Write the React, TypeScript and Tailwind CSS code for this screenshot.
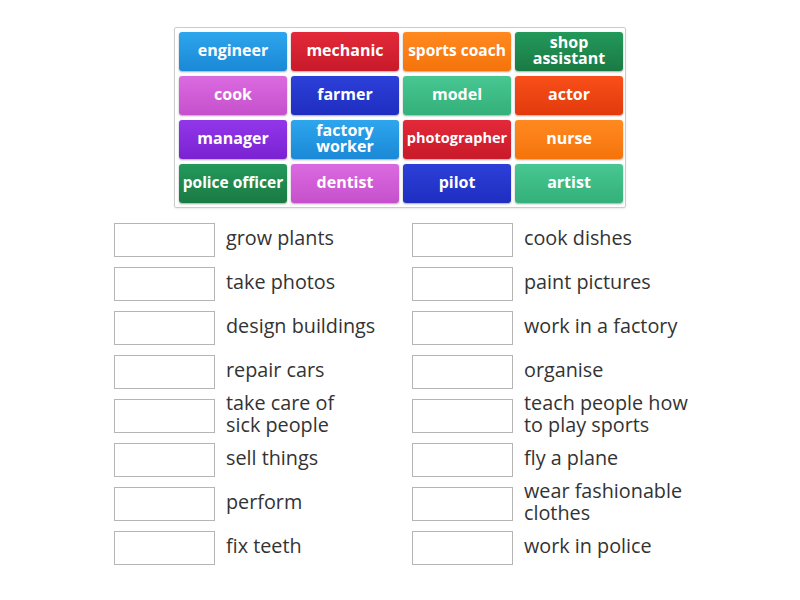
import React from 'react';

type Tile = { label: string; color: string; size?: string };

// Tile palette, gradient from lighter top to darker bottom
const tiles: Tile[] = [
  { label: 'engineer', color: 'from-[#2ea6ee] to-[#1a88d6]' },
  { label: 'mechanic', color: 'from-[#e3293a] to-[#c81a2a]' },
  { label: 'sports coach', color: 'from-[#ff8a1f] to-[#f5730a]', size: 'text-[15.5px]' },
  { label: 'shop assistant', color: 'from-[#23995a] to-[#1a7a44]' },
  { label: 'cook', color: 'from-[#db6ae0] to-[#c650cc]' },
  { label: 'farmer', color: 'from-[#2c3fd8] to-[#1f2ec0]' },
  { label: 'model', color: 'from-[#48c792] to-[#34b07a]' },
  { label: 'actor', color: 'from-[#f84f1a] to-[#e23a0a]' },
  { label: 'manager', color: 'from-[#9236ea] to-[#7a22d2]' },
  { label: 'factory worker', color: 'from-[#2ea6ee] to-[#1a88d6]' },
  { label: 'photographer', color: 'from-[#e3293a] to-[#c81a2a]', size: 'text-[14.5px]' },
  { label: 'nurse', color: 'from-[#ff8a1f] to-[#f5730a]' },
  { label: 'police officer', color: 'from-[#23995a] to-[#1a7a44]', size: 'text-[15.5px]' },
  { label: 'dentist', color: 'from-[#db6ae0] to-[#c650cc]' },
  { label: 'pilot', color: 'from-[#2c3fd8] to-[#1f2ec0]' },
  { label: 'artist', color: 'from-[#48c792] to-[#34b07a]' },
];

const leftItems = [
  'grow plants',
  'take photos',
  'design buildings',
  'repair cars',
  'take care of\nsick people',
  'sell things',
  'perform',
  'fix teeth',
];

const rightItems = [
  'cook dishes',
  'paint pictures',
  'work in a factory',
  'organise',
  'teach people how\nto play sports',
  'fly a plane',
  'wear fashionable\nclothes',
  'work in police',
];

function AnswerRow({ text }: { text: string }) {
  return (
    <div className="flex h-[34px] items-center gap-[11px]">
      <div className="h-[34px] w-[101px] shrink-0 border border-[#b5b5b5] bg-white" />
      <p className="shrink-0 whitespace-pre pb-[5px] text-[19.8px] leading-[22px] text-[#333333]">{text}</p>
    </div>
  );
}

export default function App() {
  return (
    <div
      className="flex h-[600px] w-[800px] flex-col items-center bg-white pt-[27px]"
      style={{ fontFamily: '"Open Sans", "Liberation Sans", sans-serif' }}
    >
      {/* Word bank */}
      <div className="grid w-[452px] grid-cols-[repeat(4,108px)] gap-x-[4px] gap-y-[5px] rounded-[2px] border border-[#cccccc] px-[4px] py-[4px] shadow-[0_1px_2px_rgba(0,0,0,0.08)]">
        {tiles.map((t) => (
          <div
            key={t.label}
            className={`flex h-[39px] items-center justify-center rounded-[3px] bg-gradient-to-b px-[1px] pb-[4px] text-center font-bold leading-[16px] text-white shadow-[0_1px_2px_rgba(0,0,0,0.35)] ${t.color} ${
              t.size ?? 'text-[16px]'
            }`}
          >
            {t.label}
          </div>
        ))}
      </div>

      {/* Match list */}
      <div className="mt-[15px] ml-[114px] grid w-[572px] grid-cols-[298px_274px] self-start">
        <div className="flex flex-col gap-[10px]">
          {leftItems.map((t) => (
            <AnswerRow key={t} text={t} />
          ))}
        </div>
        <div className="flex flex-col gap-[10px]">
          {rightItems.map((t) => (
            <AnswerRow key={t} text={t} />
          ))}
        </div>
      </div>
    </div>
  );
}
